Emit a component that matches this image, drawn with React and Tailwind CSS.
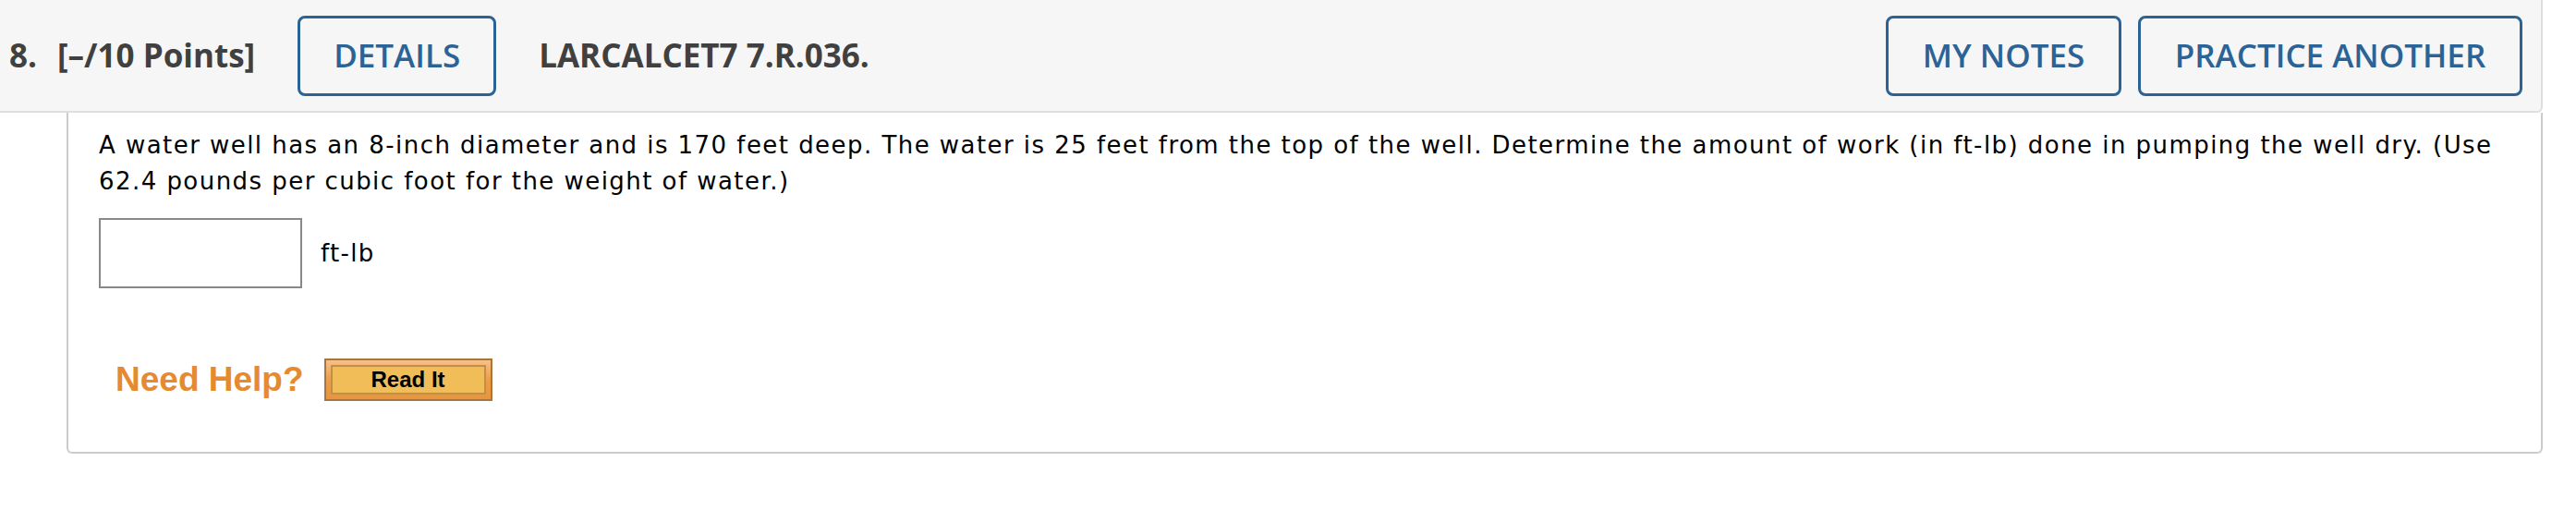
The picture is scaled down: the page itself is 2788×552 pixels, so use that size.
import React from 'react';

const openSans = { fontFamily: '"Open Sans", "Liberation Sans", sans-serif' };
const verdana = { fontFamily: '"DejaVu Sans", Verdana, sans-serif' };
const arial = { fontFamily: '"Liberation Sans", Arial, sans-serif' };

function OutlineButton({ children, className = '' }) {
  return (
    <button
      className={`h-[87px] rounded-lg border-[3px] border-[#2c6396] bg-transparent text-[35px] font-semibold text-[#2c6396] ${className}`}
      style={openSans}
    >
      {children}
    </button>
  );
}

export default function App() {
  return (
    <div className="w-[2752px] bg-white">
      <div
        className="flex h-[122px] items-center rounded-br-md border-b-2 border-r-2 border-[#dedede] bg-[#f6f6f6] pl-[10px] pr-[20px]"
        style={openSans}
      >
        <span className="text-[35px] font-bold text-[#404040]">8.</span>
        <span className="ml-[22px] text-[35px] font-bold text-[#404040]">[–/10 Points]</span>
        <OutlineButton className="ml-[46px] w-[215px]">DETAILS</OutlineButton>
        <span className="ml-[46px] text-[35px] font-bold text-[#404040]">LARCALCET7 7.R.036.</span>
        <div className="ml-auto flex gap-[18px]">
          <OutlineButton className="w-[255px]">MY NOTES</OutlineButton>
          <OutlineButton className="w-[416px]">PRACTICE ANOTHER</OutlineButton>
        </div>
      </div>

      <div className="ml-[72px] rounded-b-md border-2 border-t-0 border-[#cccccc] pb-[50px] pl-[33px] pr-[30px] pt-[16px]">
        <p className="text-[26px] leading-[39px] tracking-[1.45px] text-black" style={verdana}>
          A water well has an 8-inch diameter and is 170 feet deep. The water is 25 feet from the top of the well. Determine the amount of work (in ft-lb) done in pumping the well dry. (Use 62.4 pounds per cubic foot for the weight of water.)
        </p>

        <div className="mt-[20px] flex items-center gap-[20px]">
          <input
            type="text"
            className="h-[76px] w-[220px] border-2 border-[#888888] bg-white outline-none"
          />
          <span className="text-[26px] tracking-[1.3px] text-black" style={verdana}>ft-lb</span>
        </div>

        <div className="mt-[71px] flex items-center pl-[18px]" style={arial}>
          <span className="text-[37px] font-bold text-[#e58a30]">Need Help?</span>
          <button className="ml-[22px] h-[46px] w-[182px] border-2 border-[#a9753b] bg-gradient-to-b from-[#f6c187] via-[#ec9d48] to-[#e8953e] p-[5px]">
            <span className="flex h-full w-full items-center justify-center border-2 border-[#c58e45] bg-[#f1bd59] text-[24px] font-bold leading-none text-black">
              Read It
            </span>
          </button>
        </div>
      </div>
    </div>
  );
}
